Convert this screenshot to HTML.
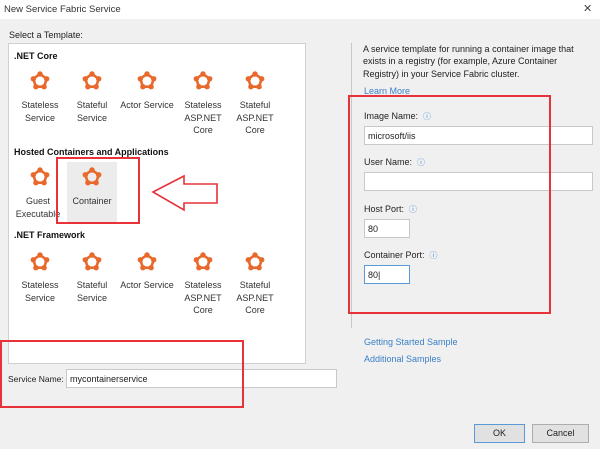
<!DOCTYPE html>
<html><head><style>
*{margin:0;padding:0;box-sizing:border-box}
body{width:600px;height:449px;background:#f0f0f0;font-family:"Liberation Sans",sans-serif;font-size:9px;color:#222;position:relative;overflow:hidden}
.a{position:absolute;white-space:nowrap}
.lab{position:absolute;width:56px;text-align:center;line-height:12.5px;color:#333}
.h{font-weight:bold;font-size:9px;color:#111}
.inp{position:absolute;background:#fff;border:1px solid #c8c8c8;height:19px;padding:3px 3px;font-size:9px;line-height:12px}
.lnk{color:#3a7fc8}
.info{color:#4a90d9;font-size:8px}
.rb{position:absolute;border:2px solid #e8323a}
svg.ic{position:absolute;width:22px;height:22px}
</style></head><body>
<div class="a" style="left:0;top:0;width:600px;height:19px;background:#fff"></div>
<div class="a" style="left:4px;top:4px;font-size:9.5px;color:#333">New Service Fabric Service</div>
<div class="a" style="left:583px;top:2px;font-size:11px;color:#444">✕</div>
<div class="a" style="left:9px;top:30px">Select a Template:</div>
<div class="a" style="left:8px;top:43px;width:298px;height:321px;background:#fff;border:1px solid #d0d0d0"></div>
<div class="a" style="left:351px;top:43px;width:1px;height:285px;background:#c8c8c8"></div>

<div class="a h" style="left:14px;top:51px">.NET Core</div>
<div class="a h" style="left:14px;top:147px">Hosted Containers and Applications</div>
<div class="a h" style="left:14px;top:230px">.NET Framework</div>

<div class="a" style="left:67px;top:162px;width:50px;height:60px;background:#ececec"></div>

<svg width="0" height="0" style="position:absolute"><defs><g id="st"><polygon points="11,4 17.7,8.8 15.1,16.7 6.9,16.7 4.3,8.8" fill="none" stroke="#e8692c" stroke-width="2.6"/><g fill="#e8692c"><circle cx="11" cy="4" r="2.7"/><circle cx="17.7" cy="8.8" r="2.7"/><circle cx="15.1" cy="16.7" r="2.7"/><circle cx="6.9" cy="16.7" r="2.7"/><circle cx="4.3" cy="8.8" r="2.7"/></g></g></defs></svg>

<svg class="ic" style="left:29px;top:70px"><use href="#st"/></svg>
<svg class="ic" style="left:81px;top:70px"><use href="#st"/></svg>
<svg class="ic" style="left:136px;top:70px"><use href="#st"/></svg>
<svg class="ic" style="left:192px;top:70px"><use href="#st"/></svg>
<svg class="ic" style="left:244px;top:70px"><use href="#st"/></svg>
<div class="lab" style="left:12px;top:99px">Stateless<br>Service</div>
<div class="lab" style="left:64px;top:99px">Stateful<br>Service</div>
<div class="lab" style="left:116px;top:99px;width:62px">Actor Service</div>
<div class="lab" style="left:175px;top:99px">Stateless<br>ASP.NET<br>Core</div>
<div class="lab" style="left:227px;top:99px">Stateful<br>ASP.NET<br>Core</div>

<svg class="ic" style="left:29px;top:166px"><use href="#st"/></svg>
<svg class="ic" style="left:81px;top:166px"><use href="#st"/></svg>
<div class="lab" style="left:10px;top:195px">Guest<br>Executable</div>
<div class="lab" style="left:64px;top:195px">Container</div>

<svg class="ic" style="left:29px;top:251px"><use href="#st"/></svg>
<svg class="ic" style="left:81px;top:251px"><use href="#st"/></svg>
<svg class="ic" style="left:136px;top:251px"><use href="#st"/></svg>
<svg class="ic" style="left:192px;top:251px"><use href="#st"/></svg>
<svg class="ic" style="left:244px;top:251px"><use href="#st"/></svg>
<div class="lab" style="left:12px;top:279px">Stateless<br>Service</div>
<div class="lab" style="left:64px;top:279px">Stateful<br>Service</div>
<div class="lab" style="left:116px;top:279px;width:62px">Actor Service</div>
<div class="lab" style="left:175px;top:279px">Stateless<br>ASP.NET<br>Core</div>
<div class="lab" style="left:227px;top:279px">Stateful<br>ASP.NET<br>Core</div>

<div class="rb" style="left:56px;top:157px;width:84px;height:67px"></div>
<svg class="a" style="left:0;top:0;width:600px;height:449px" viewBox="0 0 600 449"><polygon points="153,192 184,176 184,184 217,184 217,203 184,203 184,210" fill="none" stroke="#e8323a" stroke-width="1.6"/></svg>

<div class="a" style="left:8px;top:374px;font-size:8.5px">Service Name:</div>
<div class="inp" style="left:66px;top:369px;width:271px">mycontainerservice</div>
<div class="rb" style="left:0;top:340px;width:244px;height:68px"></div>

<div class="a" style="left:363px;top:43px;line-height:12.3px;white-space:normal;width:230px">A service template for running a container image that exists in a registry (for example, Azure Container Registry) in your Service Fabric cluster.</div>
<div class="a lnk" style="left:364px;top:86px">Learn More</div>
<div class="a" style="left:364px;top:111px">Image Name: &nbsp;<span class="info">ⓘ</span></div>
<div class="inp" style="left:364px;top:126px;width:229px">microsoft/iis</div>
<div class="a" style="left:364px;top:157px">User Name: &nbsp;<span class="info">ⓘ</span></div>
<div class="inp" style="left:364px;top:172px;width:229px"></div>
<div class="a" style="left:364px;top:204px">Host Port: &nbsp;<span class="info">ⓘ</span></div>
<div class="inp" style="left:364px;top:219px;width:46px">80</div>
<div class="a" style="left:364px;top:250px">Container Port: &nbsp;<span class="info">ⓘ</span></div>
<div class="inp" style="left:364px;top:265px;width:46px;border-color:#5a9ad8">80|</div>
<div class="rb" style="left:348px;top:95px;width:203px;height:219px"></div>
<div class="a lnk" style="left:364px;top:337px">Getting Started Sample</div>
<div class="a lnk" style="left:364px;top:354px">Additional Samples</div>

<div class="a" style="left:474px;top:424px;width:51px;height:19px;background:#e1e1e1;border:1px solid #5a9ad8;text-align:center;line-height:17px">OK</div>
<div class="a" style="left:532px;top:424px;width:57px;height:19px;background:#e1e1e1;border:1px solid #adadad;text-align:center;line-height:17px">Cancel</div>
</body></html>
